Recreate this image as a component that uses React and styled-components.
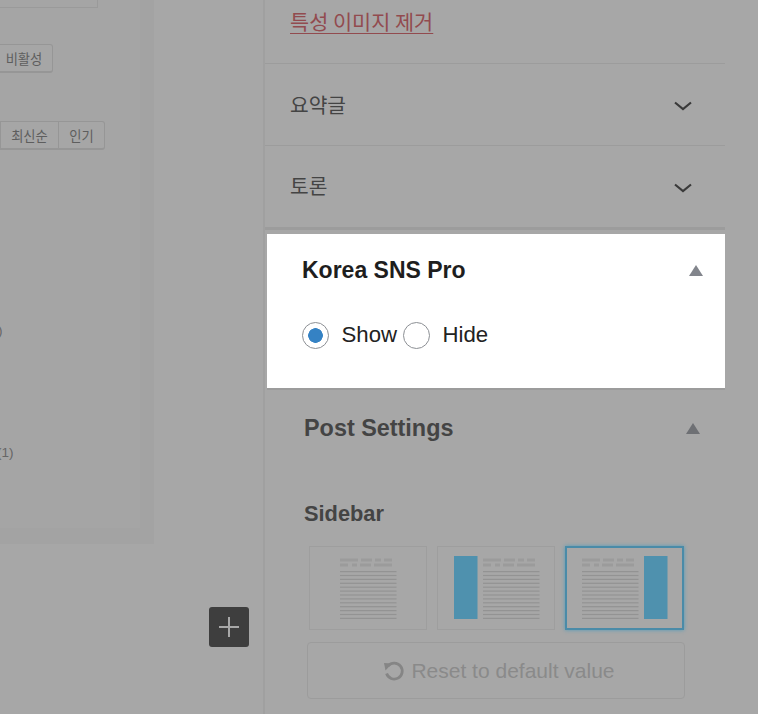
import React from 'react'
import styled, { createGlobalStyle } from 'styled-components'

const sans = `"Liberation Sans", "Noto Sans CJK KR", sans-serif`
const kr = `"Noto Sans CJK KR", "Liberation Sans", sans-serif`

const GlobalStyle = createGlobalStyle`
  html, body {
    margin: 0;
    height: 714px;
    overflow: hidden;
    background: #a7a7a7;
    font-family: ${sans};
  }
`

const Page = styled.div`
  display: flex;
  width: 758px;
  height: 714px;
  overflow: hidden;
`

/* left editor area */
const Editor = styled.div`
  width: 263px;
  flex: none;
  display: flex;
  flex-direction: column;
`
const Panel = styled.div`
  width: 140px;
  height: 528px;
  flex: none;
  display: flex;
  flex-direction: column;
  overflow: hidden;
  background: #a5a5a5;
  border-right: 14px solid #a3a3a3;
  border-bottom: 16px solid #a3a3a3;
`
const SearchBox = styled.div`
  width: 98px;
  height: 8px;
  flex: none;
  box-sizing: border-box;
  border-right: 1px solid #9a9a9a;
  border-bottom: 1px solid #9a9a9a;
`
const SmallButton = styled.div`
  height: 29px;
  box-sizing: border-box;
  display: flex;
  align-items: center;
  justify-content: center;
  padding-left: ${p => p.$indent || 0}px;
  font: 13.3px ${kr};
  color: #5e5e5e;
  background: #a6a6a6;
  border: 1px solid #969696;
  border-bottom-width: 2px;
  border-radius: ${p => p.$radius || '3px'};
  width: ${p => p.$width}px;
  margin-left: ${p => p.$left || 0}px;
`
const FilterRow = styled.div`
  display: flex;
  margin-top: ${p => p.$top}px;
`
const CountText = styled.div`
  font: 13.5px ${sans};
  line-height: 16px;
  color: #666;
  margin-top: ${p => p.$top}px;
  margin-left: ${p => p.$left}px;
`
const AddButton = styled.div`
  width: 40px;
  height: 40px;
  margin: 63px 14px 0 0;
  align-self: flex-end;
  display: flex;
  align-items: center;
  justify-content: center;
  border-radius: 3px;
  background: #3e3e3e;
`

/* right settings column */
const Sidebar = styled.div`
  width: 462px;
  flex: none;
  box-sizing: border-box;
  border-left: 2px solid #a0a0a0;
  display: flex;
  flex-direction: column;
`
const Section = styled.div`
  height: ${p => p.$height}px;
  flex: none;
  box-sizing: border-box;
  display: flex;
  align-items: center;
  justify-content: space-between;
  padding: 0 33px ${p => p.$lift || 0}px 25px;
  border-bottom: ${p => p.$rule || '1px'} solid #9c9c9c;
`
const RemoveLink = styled.span`
  font: 20.8px ${kr};
  color: #924b4f;
  text-decoration: underline;
  text-underline-offset: 3px;
  text-decoration-thickness: 1px;
`
const SectionTitle = styled.span`
  font: 20.3px ${kr};
  color: #444;
`
const ChevronIcon = styled.svg`
  margin-top: ${p => p.$top}px;
`
const Highlight = styled.div`
  height: 154px;
  flex: none;
  margin: 4px 0 0 2px;
  box-sizing: border-box;
  padding: 20px 22px 0 35px;
  background: #fff;
  box-shadow: 0 2px 0 #9c9c9c;
  display: flex;
  flex-direction: column;
`
const BoxHead = styled.div`
  display: flex;
  align-items: center;
  justify-content: space-between;
`
const BoxTitle = styled.h3`
  margin: 0;
  font: bold ${p => p.$muted ? 23.4 : 23}px/32px ${sans};
  color: ${p => p.$muted ? '#444' : '#1e1e1e'};
`
const RadioRow = styled.div`
  display: flex;
  align-items: center;
  margin-top: 34px;
`
const Radio = styled.input.attrs({ type: 'radio', readOnly: true })`
  appearance: none;
  width: 27px;
  height: 27px;
  margin: 0 12.5px 0 0;
  box-sizing: border-box;
  border-radius: 50%;
  border: 1.5px solid #8c8f94;
  background: ${p => p.checked ? 'radial-gradient(circle, #3582c4 0 7px, #fff 7.6px)' : '#fff'};
`
const RadioLabel = styled.label`
  font: 22.2px/30px ${sans};
  color: #222;
  margin-right: 6px;
`
const PostSettings = styled.div`
  padding: 24px 25px 0 39px;
  display: flex;
  flex-direction: column;
`
const FieldLabel = styled.div`
  margin-top: 55px;
  font: bold 21.8px/30px ${sans};
  color: #444;
`
const ThumbRow = styled.div`
  display: flex;
  gap: 10px;
  margin: 17px 0 0 5px;
`
const Thumb = styled.div`
  width: ${p => p.$width || 118}px;
  height: 84px;
  flex: none;
  box-sizing: border-box;
  border: 1px solid ${p => p.$active ? '#4a8ba8' : '#9e9e9e'};
  outline: ${p => p.$active ? '1px solid #4a8ba8' : 'none'};
  outline-offset: -2px;
  box-shadow: ${p => p.$active ? '0 0 4px #4f9cba' : 'none'};
`
const ThumbArt = styled.svg`
  display: block;
  filter: blur(0.4px);
`
const ResetButton = styled.div`
  width: 378px;
  height: 57px;
  margin: 12px 0 0 3px;
  box-sizing: border-box;
  display: flex;
  align-items: center;
  justify-content: center;
  gap: 6px;
  padding-left: 6px;
  font: 21px ${sans};
  color: #8a8a8a;
  border: 1px solid #9c9c9c;
  border-radius: 4px;
`

const Chevron = ({ top }) => (
  <ChevronIcon $top={top} width="18" height="10" viewBox="0 0 18 10">
    <path d="M1 1.5 L9 8 L17 1.5" fill="none" stroke="#3a3a3a" strokeWidth="2.2" />
  </ChevronIcon>
)

const Caret = ({ color }) => (
  <svg width="14" height="11" viewBox="0 0 14 11">
    <path d="M7 0 L14 11 L0 11 Z" fill={color} />
  </svg>
)

const topDashes = [
  [14, 0, 18], [14, 21, 11], [14, 35, 6], [14, 44, 8],
  [19, 0, 8], [19, 12, 5], [19, 20, 11], [19, 34, 18],
]

// coordinates are measured from the thumb's outer corner, hence the viewBox offset
const PostLayout = ({ textX, barX }) => (
  <ThumbArt width="100%" height="100%" viewBox="1 1 116 82" preserveAspectRatio="xMinYMin">
    {topDashes.map(([y, x, w], i) => (
      <rect key={i} x={textX + x} y={y - 1.5} width={w} height="3" fill="#9b9b9b" />
    ))}
    {Array.from({ length: 13 }, (_, i) => (
      <rect key={i} x={textX} y={25 + i * 3.9} width="56.5" height="1.2" fill="#939393" />
    ))}
    {barX !== undefined && <rect x={barX} y="10" width="23.5" height="63" fill="#4f91ae" />}
  </ThumbArt>
)

const ResetIcon = () => (
  <svg width="22" height="22" viewBox="0 0 22 22">
    <path d="M5.2 5.8 A8 8 0 1 1 3.6 13.5" fill="none" stroke="#858585" strokeWidth="2.8" />
    <path d="M1 3 L9 3.6 L2.5 10.5 Z" fill="#858585" />
  </svg>
)

export default function App() {
  return (
    <Page>
      <GlobalStyle />
      <Editor>
        <Panel>
          <SearchBox />
          <FilterRow $top={36}>
            <SmallButton $width={60} $left={-7} $indent={2}>비활성</SmallButton>
          </FilterRow>
          <FilterRow $top={48}>
            <SmallButton $width={59} $radius="0">최신순</SmallButton>
            <SmallButton $width={47} $left={-1} $radius="0 3px 3px 0">인기</SmallButton>
          </FilterRow>
          <CountText $top={173} $left={-2}>)</CountText>
          <CountText $top={106} $left={-3}>(1)</CountText>
        </Panel>
        <AddButton>
          <svg width="22" height="22" viewBox="0 0 22 22">
            <path d="M11 1 V21 M1 11 H21" stroke="#a8a8a8" strokeWidth="2" />
          </svg>
        </AddButton>
      </Editor>
      <Sidebar>
        <Section $height={64} $lift={22}>
          <RemoveLink>특성 이미지 제거</RemoveLink>
        </Section>
        <Section $height={82} $lift={2}>
          <SectionTitle>요약글</SectionTitle>
          <Chevron top={4} />
        </Section>
        <Section $height={84} $rule="3px" $lift={4}>
          <SectionTitle>토론</SectionTitle>
          <Chevron top={6} />
        </Section>
        <Highlight>
          <BoxHead>
            <BoxTitle>Korea SNS Pro</BoxTitle>
            <Caret color="#82858c" />
          </BoxHead>
          <RadioRow>
            <Radio name="sns" checked />
            <RadioLabel>Show</RadioLabel>
            <Radio name="sns" checked={false} />
            <RadioLabel>Hide</RadioLabel>
          </RadioRow>
        </Highlight>
        <PostSettings>
          <BoxHead>
            <BoxTitle $muted>Post Settings</BoxTitle>
            <Caret color="#6e7074" />
          </BoxHead>
          <FieldLabel>Sidebar</FieldLabel>
          <ThumbRow>
            <Thumb><PostLayout textX={31} /></Thumb>
            <Thumb><PostLayout textX={46} barX={17} /></Thumb>
            <Thumb $active $width={119}><PostLayout textX={17} barX={79} /></Thumb>
          </ThumbRow>
          <ResetButton><ResetIcon />Reset to default value</ResetButton>
        </PostSettings>
      </Sidebar>
    </Page>
  )
}
